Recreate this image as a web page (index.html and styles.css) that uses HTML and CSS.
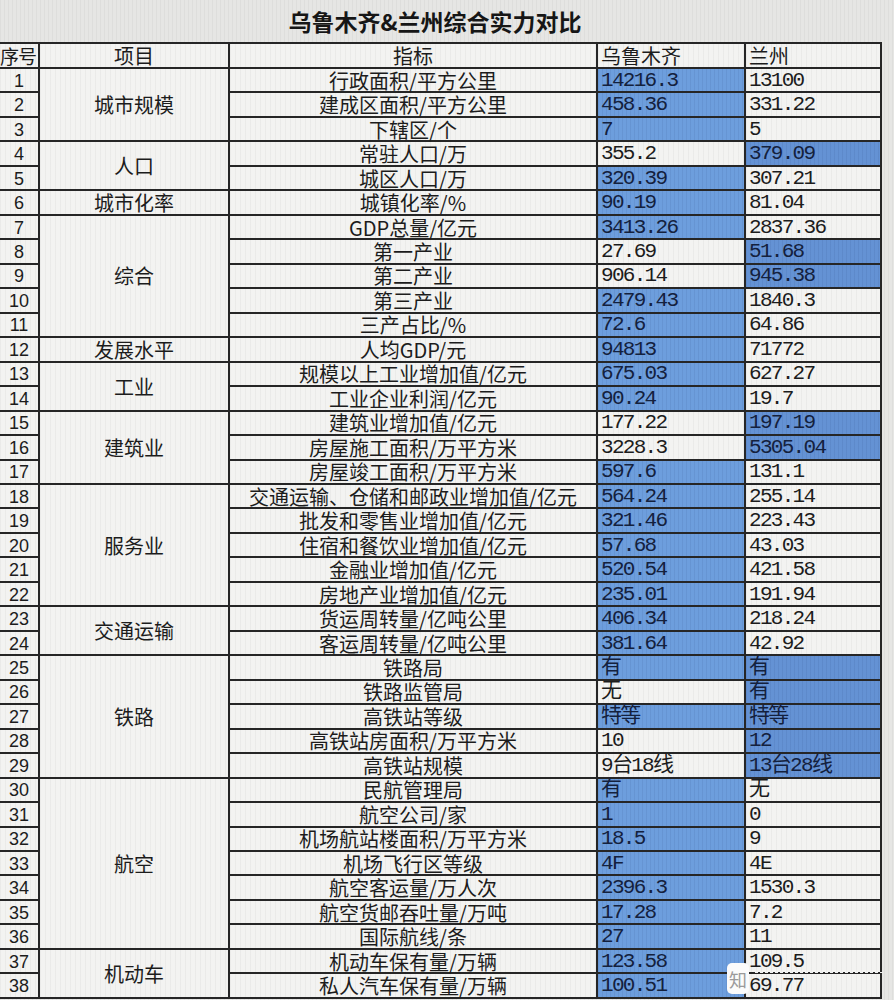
FILE: index.html
```html
<!DOCTYPE html>
<html lang="zh-CN">
<head>
<meta charset="utf-8">
<title>乌鲁木齐&amp;兰州综合实力对比</title>
<link rel="stylesheet" href="styles.css">
</head>
<body>
<div class="page">
  <h1 class="title">乌鲁木齐&amp;兰州综合实力对比</h1>
  <div class="sheet">
    <div class="c n hd">序号</div><div class="c item hd">项目</div><div class="c ind hd">指标</div><div class="c u hd">乌鲁木齐</div><div class="c l hd">兰州</div>

    <div class="c n">1</div><div class="c item span3">城市规模</div><div class="c ind">行政面积/平方公里</div><div class="c u b">14216.3</div><div class="c l">13100</div>
    <div class="c n">2</div><div class="c ind">建成区面积/平方公里</div><div class="c u b">458.36</div><div class="c l">331.22</div>
    <div class="c n">3</div><div class="c ind">下辖区/个</div><div class="c u b">7</div><div class="c l">5</div>
    <div class="c n">4</div><div class="c item span2">人口</div><div class="c ind">常驻人口/万</div><div class="c u">355.2</div><div class="c l b">379.09</div>
    <div class="c n">5</div><div class="c ind">城区人口/万</div><div class="c u b">320.39</div><div class="c l">307.21</div>
    <div class="c n">6</div><div class="c item">城市化率</div><div class="c ind">城镇化率/%</div><div class="c u b">90.19</div><div class="c l">81.04</div>
    <div class="c n">7</div><div class="c item span5">综合</div><div class="c ind">GDP总量/亿元</div><div class="c u b">3413.26</div><div class="c l">2837.36</div>
    <div class="c n">8</div><div class="c ind">第一产业</div><div class="c u">27.69</div><div class="c l b">51.68</div>
    <div class="c n">9</div><div class="c ind">第二产业</div><div class="c u">906.14</div><div class="c l b">945.38</div>
    <div class="c n">10</div><div class="c ind">第三产业</div><div class="c u b">2479.43</div><div class="c l">1840.3</div>
    <div class="c n">11</div><div class="c ind">三产占比/%</div><div class="c u b">72.6</div><div class="c l">64.86</div>
    <div class="c n">12</div><div class="c item">发展水平</div><div class="c ind">人均GDP/元</div><div class="c u b">94813</div><div class="c l">71772</div>
    <div class="c n">13</div><div class="c item span2">工业</div><div class="c ind">规模以上工业增加值/亿元</div><div class="c u b">675.03</div><div class="c l">627.27</div>
    <div class="c n">14</div><div class="c ind">工业企业利润/亿元</div><div class="c u b">90.24</div><div class="c l">19.7</div>
    <div class="c n">15</div><div class="c item span3">建筑业</div><div class="c ind">建筑业增加值/亿元</div><div class="c u">177.22</div><div class="c l b">197.19</div>
    <div class="c n">16</div><div class="c ind">房屋施工面积/万平方米</div><div class="c u">3228.3</div><div class="c l b">5305.04</div>
    <div class="c n">17</div><div class="c ind">房屋竣工面积/万平方米</div><div class="c u b">597.6</div><div class="c l">131.1</div>
    <div class="c n">18</div><div class="c item span5">服务业</div><div class="c ind">交通运输、仓储和邮政业增加值/亿元</div><div class="c u b">564.24</div><div class="c l">255.14</div>
    <div class="c n">19</div><div class="c ind">批发和零售业增加值/亿元</div><div class="c u b">321.46</div><div class="c l">223.43</div>
    <div class="c n">20</div><div class="c ind">住宿和餐饮业增加值/亿元</div><div class="c u b">57.68</div><div class="c l">43.03</div>
    <div class="c n">21</div><div class="c ind">金融业增加值/亿元</div><div class="c u b">520.54</div><div class="c l">421.58</div>
    <div class="c n">22</div><div class="c ind">房地产业增加值/亿元</div><div class="c u b">235.01</div><div class="c l">191.94</div>
    <div class="c n">23</div><div class="c item span2">交通运输</div><div class="c ind">货运周转量/亿吨公里</div><div class="c u b">406.34</div><div class="c l">218.24</div>
    <div class="c n">24</div><div class="c ind">客运周转量/亿吨公里</div><div class="c u b">381.64</div><div class="c l">42.92</div>
    <div class="c n">25</div><div class="c item span5">铁路</div><div class="c ind">铁路局</div><div class="c u b">有</div><div class="c l b">有</div>
    <div class="c n">26</div><div class="c ind">铁路监管局</div><div class="c u">无</div><div class="c l b">有</div>
    <div class="c n">27</div><div class="c ind">高铁站等级</div><div class="c u b">特等</div><div class="c l b">特等</div>
    <div class="c n">28</div><div class="c ind">高铁站房面积/万平方米</div><div class="c u">10</div><div class="c l b">12</div>
    <div class="c n">29</div><div class="c ind">高铁站规模</div><div class="c u">9台18线</div><div class="c l b">13台28线</div>
    <div class="c n">30</div><div class="c item span7">航空</div><div class="c ind">民航管理局</div><div class="c u b">有</div><div class="c l">无</div>
    <div class="c n">31</div><div class="c ind">航空公司/家</div><div class="c u b">1</div><div class="c l">0</div>
    <div class="c n">32</div><div class="c ind">机场航站楼面积/万平方米</div><div class="c u b">18.5</div><div class="c l">9</div>
    <div class="c n">33</div><div class="c ind">机场飞行区等级</div><div class="c u b">4F</div><div class="c l">4E</div>
    <div class="c n">34</div><div class="c ind">航空客运量/万人次</div><div class="c u b">2396.3</div><div class="c l">1530.3</div>
    <div class="c n">35</div><div class="c ind">航空货邮吞吐量/万吨</div><div class="c u b">17.28</div><div class="c l">7.2</div>
    <div class="c n">36</div><div class="c ind">国际航线/条</div><div class="c u b">27</div><div class="c l">11</div>
    <div class="c n">37</div><div class="c item span2">机动车</div><div class="c ind">机动车保有量/万辆</div><div class="c u b">123.58</div><div class="c l">109.5</div>
    <div class="c n">38</div><div class="c ind">私人汽车保有量/万辆</div><div class="c u b">100.51</div><div class="c l">69.77</div>
  </div>
  <div class="mark"><span class="mark-glyph">知</span></div>
  <div class="mark-line"></div>
</div>
</body>
</html>
```

FILE: styles.css
```css
* { box-sizing: border-box; }
html, body { margin: 0; padding: 0; }
body {
  width: 894px;
  height: 1000px;
  overflow: hidden;
  background-color: #e6e6e4;
  background-image: repeating-linear-gradient(90deg, rgba(0,0,0,0.035) 0 1px, transparent 1px 4px);
  font-family: "Noto Sans CJK SC", "Liberation Sans", sans-serif;
  color: #1c1c1c;
}
.page { position: relative; width: 894px; height: 1000px; overflow: hidden; }
.title {
  margin: 0;
  height: 42px;
  width: 870px;
  display: flex;
  align-items: center;
  justify-content: center;
  font-size: 23px;
  line-height: 26px;
  font-weight: 700;
  color: #161616;
}
.sheet {
  display: grid;
  width: 882px;
  grid-template-columns: 38px 188px 366px 146px 134px;
  grid-template-rows: 23px repeat(38, 22.47px);
  gap: 2px;
  padding: 2px 2px 2px 0;
  background: #262626;
}
.c {
  background-color: #f3f3f1;
  background-image: repeating-linear-gradient(90deg, rgba(0,0,0,0.035) 0 1px, transparent 1px 5px);
  font-size: 20px;
  line-height: 20px;
  white-space: nowrap;
  display: flex;
  align-items: center;
  padding-top: 1px;
}
.n {
  grid-column: 1;
  justify-content: center;
  font-family: "Liberation Sans", Arial, sans-serif;
  font-size: 18px;
}
.item {
  grid-column: 2;
  justify-content: center;
}
.span2 { grid-row: span 2; }
.span3 { grid-row: span 3; }
.span5 { grid-row: span 5; }
.span7 { grid-row: span 7; }
.ind { grid-column: 3; justify-content: center; }
.u { grid-column: 4; padding-left: 3px; }
.l { grid-column: 5; padding-left: 3px; }
.u, .l {
  font-family: "Liberation Mono", "Noto Sans CJK SC", monospace;
  font-size: 21px;
  letter-spacing: -1.7px;
}
.hd.u, .hd.l {
  font-family: "Noto Sans CJK SC", sans-serif;
  font-size: 20px;
  letter-spacing: 0;
}
.hd.n {
  font-family: "Noto Sans CJK SC", sans-serif;
  font-size: 19px;
  justify-content: flex-start;
  letter-spacing: -1px;
}
.b {
  background-color: #6d9edd;
  background-image: repeating-linear-gradient(90deg, rgba(20,40,90,0.08) 0 1px, transparent 1px 4px);
  color: #14213d;
}
.l.b { background-color: #6492d4; }
.mark {
  position: absolute;
  left: 727px;
  top: 963px;
  width: 22px;
  height: 31px;
  background: #fbfbfb;
  border-radius: 5px;
  display: flex;
  align-items: center;
  justify-content: center;
  overflow: hidden;
}
.mark-glyph { font-size: 18px; line-height: 20px; color: #9a9a9a; }
.mark-line {
  position: absolute;
  left: 755px;
  top: 972px;
  width: 128px;
  border-top: 1px dashed #f0f0f0;
}
```
